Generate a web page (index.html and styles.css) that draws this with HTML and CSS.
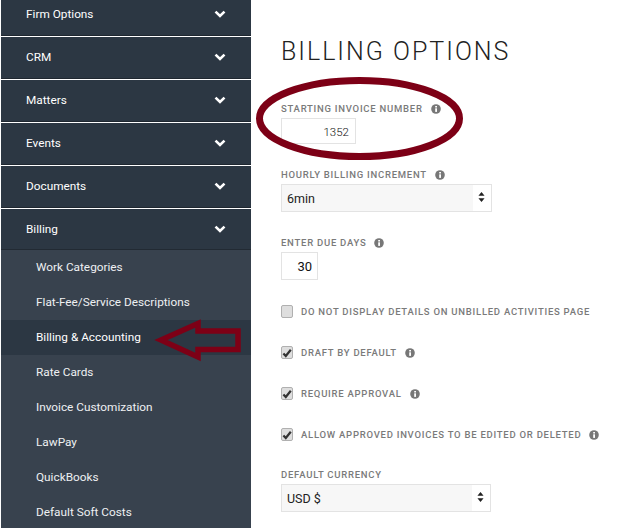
FILE: index.html
```html
<!DOCTYPE html>
<html lang="en">
<head>
<meta charset="utf-8">
<title>Billing Options</title>
<link rel="stylesheet" href="styles.css">
</head>
<body>
<svg width="0" height="0" class="defs">
  <symbol id="chev" viewBox="0 0 12 8"><path d="M1.5 1.6 6 6 10.5 1.6" fill="none" stroke="#fff" stroke-width="2.6"/></symbol>
  <symbol id="info" viewBox="0 0 10 10"><circle cx="5" cy="5" r="4.8" fill="#777"/><rect x="4.2" y="4.3" width="1.8" height="3.6" fill="#fff"/><rect x="4.2" y="2" width="1.8" height="1.5" fill="#fff"/></symbol>
  <symbol id="updown" viewBox="0 0 8 13"><path d="M4 0 8 5H0Z M0 8H8L4 13Z" fill="#222"/></symbol>
  <symbol id="tick" viewBox="0 0 10 10"><path d="M1.4 5.4 3.8 8 8.8 1.8" fill="none" stroke="#333" stroke-width="2.2"/></symbol>
</svg>
<div class="page">
  <nav class="sidebar">
    <a class="top">Firm Options<svg class="chevron"><use href="#chev"/></svg></a>
    <a class="top">CRM<svg class="chevron"><use href="#chev"/></svg></a>
    <a class="top">Matters<svg class="chevron"><use href="#chev"/></svg></a>
    <a class="top">Events<svg class="chevron"><use href="#chev"/></svg></a>
    <a class="top">Documents<svg class="chevron"><use href="#chev"/></svg></a>
    <a class="top open">Billing<svg class="chevron"><use href="#chev"/></svg></a>
    <div class="sub">
      <a>Work Categories</a>
      <a>Flat-Fee/Service Descriptions</a>
      <a class="active">Billing &amp; Accounting</a>
      <a>Rate Cards</a>
      <a>Invoice Customization</a>
      <a>LawPay</a>
      <a>QuickBooks</a>
      <a>Default Soft Costs</a>
    </div>
  </nav>
  <main class="main">
    <h1>Billing Options</h1>
    <div class="field f-invoice">
      <div class="lbl">Starting Invoice Number<svg class="info"><use href="#info"/></svg></div>
      <input class="num w-invoice" value="1352">
    </div>
    <div class="field f-hourly">
      <div class="lbl">Hourly Billing Increment<svg class="info"><use href="#info"/></svg></div>
      <div class="sel w-hourly"><span class="val">6min</span><span class="arrows"><svg class="updown"><use href="#updown"/></svg></span></div>
    </div>
    <div class="field f-due">
      <div class="lbl">Enter Due Days<svg class="info"><use href="#info"/></svg></div>
      <input class="num w-due" value="30">
    </div>
    <div class="checks">
      <div class="chk"><span class="box"></span><span class="lbl">Do not display details on unbilled activities page</span></div>
      <div class="chk"><span class="box"><svg class="tick"><use href="#tick"/></svg></span><span class="lbl">Draft by default<svg class="info"><use href="#info"/></svg></span></div>
      <div class="chk"><span class="box"><svg class="tick"><use href="#tick"/></svg></span><span class="lbl">Require approval<svg class="info"><use href="#info"/></svg></span></div>
      <div class="chk"><span class="box"><svg class="tick"><use href="#tick"/></svg></span><span class="lbl">Allow approved invoices to be edited or deleted<svg class="info"><use href="#info"/></svg></span></div>
    </div>
    <div class="field f-currency">
      <div class="lbl">Default Currency</div>
      <div class="sel w-currency"><span class="val">USD $</span><span class="arrows"><svg class="updown"><use href="#updown"/></svg></span></div>
    </div>
  </main>
  <svg class="annot" viewBox="0 0 628 528" width="628" height="528">
    <ellipse cx="359.500" cy="118.500" rx="100" ry="38" fill="none" stroke="#7d0016" stroke-width="7"/>
    <path d="M161 340 198 323.500V331H238V349.500H198V357Z" fill="none" stroke="#7d0016" stroke-width="5.500"/>
  </svg>
</div>
</body>
</html>
```

FILE: styles.css
```css
* { box-sizing: border-box; }
html, body { margin: 0; padding: 0; background: #fff; }
body { width: 628px; height: 528px; overflow: hidden; font-family: Roboto, "Liberation Sans", sans-serif; }
.defs { position: absolute; }
.page { position: relative; display: flex; width: 628px; height: 528px; overflow: hidden; }
.sidebar { flex: 0 0 250px; margin: -6px 0 0 1px; font-family: Roboto, "Liberation Sans", sans-serif; font-size: 11.800px; color: #fff; }
.top { display: flex; align-items: center; justify-content: space-between; height: 43px; padding: 0 25px 2px 25px; background: #2c3743; border-bottom: 1px solid #fff; box-shadow: inset 0 -1px 0 #1f2730; }
.top.open { height: 41px; border-bottom: 0; box-shadow: inset 0 -1px 0 #222a33; }
.chevron { width: 12px; height: 8px; }
.sub { background: #38424e; padding-top: 0; height: 400px; }
.sub a { display: flex; align-items: center; height: 34px; margin-bottom: 1px; padding-left: 35px; color: #eef0f2; }
.sub a.active { background: #2c3743; color: #fff; box-shadow: 0 1px 0 #2c3743; }
.main { flex: 1; padding: 0 0 0 30px; color: #777; }
h1 { margin: 37px 0 0; font-size: 25px; line-height: 29px; font-weight: 300; letter-spacing: 2px; text-transform: uppercase; color: #222; }
.lbl { display: flex; align-items: center; font-size: 9.500px; line-height: 12px; font-weight: 500; letter-spacing: .75px; text-transform: uppercase; color: #7a7a7a; white-space: nowrap; }
.info { width: 10px; height: 10px; margin-left: 8px; }
.field .lbl { margin-bottom: 3px; }
.f-invoice { margin-top: 37px; }
.f-hourly { margin-top: 25px; }
.f-due { margin-top: 25px; }
.f-currency { margin-top: 28px; }
.num { display: block; height: 26px; padding: 2px 6px 0 0; border: 1px solid #e3e3e3; background: #fff; text-align: right; font: 300 11.500px Roboto, sans-serif; color: #111; outline: none; }
.w-invoice { width: 75px; }
.w-due { width: 37px; height: 28px; font-size: 13px; padding: 0 5px 0 0; font-weight: 400; }
.sel { display: flex; height: 28px; border: 1px solid #e3e3e3; font-size: 12.500px; color: #222; }
.w-hourly { width: 211px; }
.w-currency { width: 210px; }
.val { flex: 1; display: flex; align-items: center; padding: 1px 0 0 5px; background: #f7f7f7; }
.arrows { flex: 0 0 18px; display: flex; align-items: center; justify-content: center; background: #fff; }
.updown { width: 7px; height: 10px; margin: -2px 2px 0 0; }
.checks { display: flex; flex-direction: column; gap: 28px; margin-top: 25px; }
.chk { display: flex; align-items: center; height: 13px; }
.box { display: flex; align-items: center; justify-content: center; width: 12px; height: 13px; margin-right: 8px; border: 1px solid #b0b0b0; border-radius: 2px; background: #dedede; }
.tick { width: 10px; height: 10px; }
.annot { position: absolute; left: 0; top: 0; pointer-events: none; }
```
